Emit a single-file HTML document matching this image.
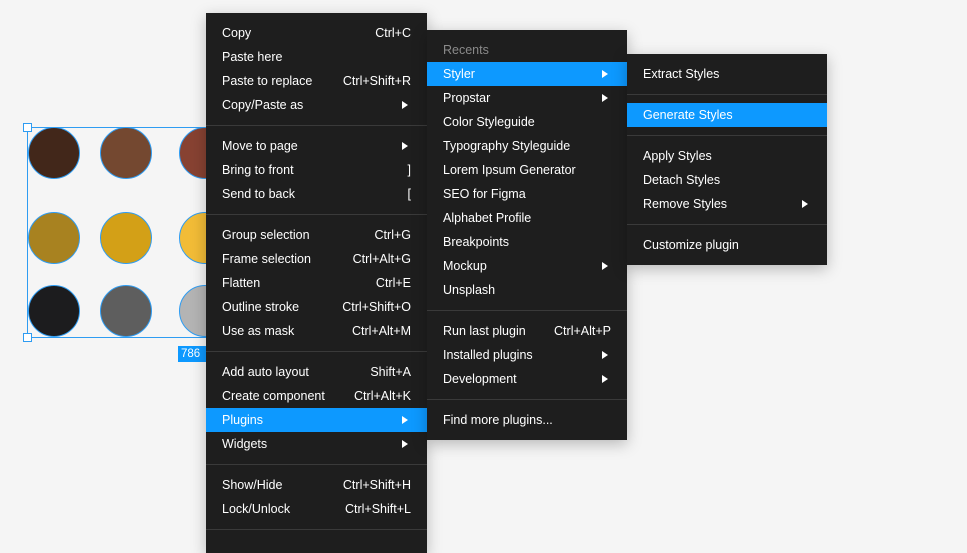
<!DOCTYPE html>
<html><head><style>
body{margin:0;width:967px;height:541px;background:#f5f5f5;position:relative;overflow:hidden;font-family:"Liberation Sans",sans-serif;font-size:12.5px;}
.c{position:absolute;width:52px;height:52px;border-radius:50%;border:1.5px solid #2e9cf2;box-sizing:border-box;}
.m{position:absolute;background:#1e1e1e;box-shadow:0 4px 14px rgba(0,0,0,.25);color:#fff;}
.i{position:absolute;left:0;right:0;height:24px;line-height:24px;padding:0 16px;}
.i.h{background:#0d99ff}
.i .k{position:absolute;right:16px;top:0}
.i .a{position:absolute;right:19px;top:8px;width:0;height:0;border-left:6px solid #fff;border-top:4px solid transparent;border-bottom:4px solid transparent}
.s{position:absolute;left:0;right:0;height:1px;background:#3a3a3a}
</style></head><body>
<div style="position:absolute;left:27px;top:127px;width:190px;height:211px;border:1px solid #2e9cf2;box-sizing:border-box"></div>
<div style="position:absolute;left:23px;top:123px;width:7px;height:7px;background:#fff;border:1px solid #2e9cf2"></div>
<div style="position:absolute;left:23px;top:333px;width:7px;height:7px;background:#fff;border:1px solid #2e9cf2"></div>
<div class="c" style="left:28px;top:127px;background:#42271a"></div>
<div class="c" style="left:100px;top:127px;background:#744830"></div>
<div class="c" style="left:179px;top:127px;background:#874232"></div>
<div class="c" style="left:28px;top:212px;background:#a88220"></div>
<div class="c" style="left:100px;top:212px;background:#d3a017"></div>
<div class="c" style="left:179px;top:212px;background:#f2bc37"></div>
<div class="c" style="left:28px;top:285px;background:#1c1c1e"></div>
<div class="c" style="left:100px;top:285px;background:#5e5e5e"></div>
<div class="c" style="left:179px;top:285px;background:#b4b4b4"></div>
<div style="position:absolute;left:178px;top:346px;width:32px;height:16px;background:#0d99ff;color:#fff;font-size:11.5px;line-height:16px;padding-left:3px;box-sizing:border-box">786</div>

<div class="m" style="left:206px;top:13px;width:221px;height:540px">
<div class="i" style="top:8px">Copy<span class="k">Ctrl+C</span></div>
<div class="i" style="top:32px">Paste here</div>
<div class="i" style="top:56px">Paste to replace<span class="k">Ctrl+Shift+R</span></div>
<div class="i" style="top:80px">Copy/Paste as<span class="a"></span></div>
<div class="s" style="top:112px"></div>
<div class="i" style="top:121px">Move to page<span class="a"></span></div>
<div class="i" style="top:145px">Bring to front<span class="k">]</span></div>
<div class="i" style="top:169px">Send to back<span class="k">[</span></div>
<div class="s" style="top:201px"></div>
<div class="i" style="top:210px">Group selection<span class="k">Ctrl+G</span></div>
<div class="i" style="top:234px">Frame selection<span class="k">Ctrl+Alt+G</span></div>
<div class="i" style="top:258px">Flatten<span class="k">Ctrl+E</span></div>
<div class="i" style="top:282px">Outline stroke<span class="k">Ctrl+Shift+O</span></div>
<div class="i" style="top:306px">Use as mask<span class="k">Ctrl+Alt+M</span></div>
<div class="s" style="top:338px"></div>
<div class="i" style="top:347px">Add auto layout<span class="k">Shift+A</span></div>
<div class="i" style="top:371px">Create component<span class="k">Ctrl+Alt+K</span></div>
<div class="i h" style="top:395px">Plugins<span class="a"></span></div>
<div class="i" style="top:419px">Widgets<span class="a"></span></div>
<div class="s" style="top:451px"></div>
<div class="i" style="top:460px">Show/Hide<span class="k">Ctrl+Shift+H</span></div>
<div class="i" style="top:484px">Lock/Unlock<span class="k">Ctrl+Shift+L</span></div>
<div class="s" style="top:516px"></div>
</div>

<div class="m" style="left:427px;top:30px;width:200px;height:410px">
<div class="i" style="top:8px;color:#8a8a8a">Recents</div>
<div class="i h" style="top:32px">Styler<span class="a"></span></div>
<div class="i" style="top:56px">Propstar<span class="a"></span></div>
<div class="i" style="top:80px">Color Styleguide</div>
<div class="i" style="top:104px">Typography Styleguide</div>
<div class="i" style="top:128px">Lorem Ipsum Generator</div>
<div class="i" style="top:152px">SEO for Figma</div>
<div class="i" style="top:176px">Alphabet Profile</div>
<div class="i" style="top:200px">Breakpoints</div>
<div class="i" style="top:224px">Mockup<span class="a"></span></div>
<div class="i" style="top:248px">Unsplash</div>
<div class="s" style="top:280px"></div>
<div class="i" style="top:289px">Run last plugin<span class="k">Ctrl+Alt+P</span></div>
<div class="i" style="top:313px">Installed plugins<span class="a"></span></div>
<div class="i" style="top:337px">Development<span class="a"></span></div>
<div class="s" style="top:369px"></div>
<div class="i" style="top:378px">Find more plugins...</div>
</div>

<div class="m" style="left:627px;top:54px;width:200px;height:211px">
<div class="i" style="top:8px">Extract Styles</div>
<div class="s" style="top:40px"></div>
<div class="i h" style="top:49px">Generate Styles</div>
<div class="s" style="top:81px"></div>
<div class="i" style="top:90px">Apply Styles</div>
<div class="i" style="top:114px">Detach Styles</div>
<div class="i" style="top:138px">Remove Styles<span class="a"></span></div>
<div class="s" style="top:170px"></div>
<div class="i" style="top:179px">Customize plugin</div>
</div>
</body></html>
